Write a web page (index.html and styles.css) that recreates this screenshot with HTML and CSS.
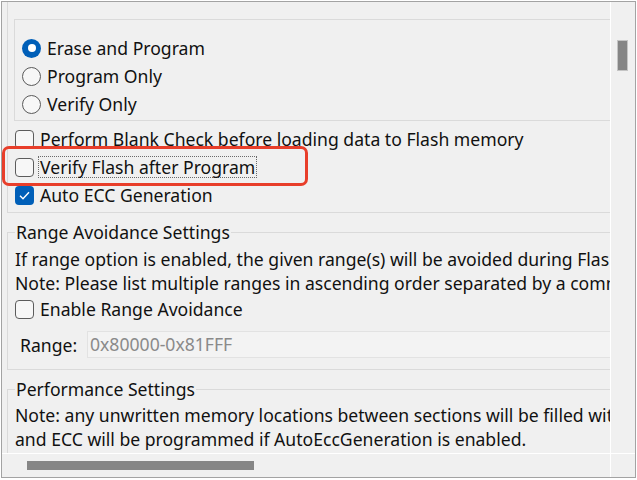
FILE: index.html
```html
<!DOCTYPE html>
<html>
<head>
<meta charset="utf-8">
<link rel="stylesheet" href="styles.css">
</head>
<body>
<div class="frame">
  <div class="viewport">
    <div class="content">
      <div class="group-outer">
        <div class="radio-box">
          <div class="row"><span class="radio on"></span><span class="lbl">Erase and Program</span></div>
          <div class="row"><span class="radio"></span><span class="lbl">Program Only</span></div>
          <div class="row"><span class="radio"></span><span class="lbl">Verify Only</span></div>
        </div>
        <div class="checks">
          <div class="row"><span class="check"></span><span class="lbl">Perform Blank Check before loading data to Flash memory</span></div>
          <div class="row"><span class="check"></span><span class="lbl focus">Verify Flash after Program</span></div>
          <div class="row"><span class="check on"><svg width="19" height="19" viewBox="0 0 19 19"><path d="M5 9.8 L8 12.8 L14 6.3" fill="none" stroke="#fff" stroke-width="1.4"/></svg></span><span class="lbl">Auto ECC Generation</span></div>
        </div>
      </div>
      <fieldset class="group range">
        <legend>Range Avoidance Settings</legend>
        <p class="line">If range option is enabled, the given range(s) will be avoided during Flash</p>
        <p class="line">Note: Please list multiple ranges in ascending order separated by a comma</p>
        <div class="row"><span class="check"></span><span class="lbl">Enable Range Avoidance</span></div>
        <div class="range-row"><span class="range-label">Range:</span><div class="input">0x80000-0x81FFF</div></div>
      </fieldset>
      <fieldset class="group perf">
        <legend>Performance Settings</legend>
        <p class="line">Note: any unwritten memory locations between sections will be filled with</p>
        <p class="line">and ECC will be programmed if AutoEccGeneration is enabled.</p>
      </fieldset>
    </div>
  </div>
  <div class="vscroll"><div class="vthumb"></div></div>
  <div class="hscroll"><div class="hthumb"></div></div>
  <div class="corner"></div>
  <div class="annot"></div>
</div>
</body>
</html>
```

FILE: styles.css
```css
html, body {
  margin: 0;
  padding: 0;
  background: #ffffff;
}
body {
  width: 637px;
  height: 480px;
  overflow: hidden;
  font-family: "Noto Sans", "Open Sans", sans-serif;
  font-size: 17.6px;
  color: #111111;
}
.frame {
  position: relative;
  margin: 1px 0 0 1px;
  width: 633px;
  height: 475px;
  border: 1px solid #a3a3a3;
  background: #f0f0f0;
  display: grid;
  grid-template-columns: 608px 25px;
  grid-template-rows: 451px 24px;
}
.viewport {
  overflow: hidden;
  background: #f0f0f0;
}
.content {
  width: 1000px;
}
.group-outer {
  margin-left: 5px;
  border: 1px solid #dadada;
  border-top: none;
  padding: 17px 0 3px 6px;
}
.radio-box {
  border: 1px solid #dadada;
  padding: 14px 0 2px 7px;
}
.row {
  display: flex;
  align-items: center;
  height: 28px;
  white-space: nowrap;
}
.radio {
  width: 19px;
  height: 19px;
  box-sizing: border-box;
  border-radius: 50%;
  border: 1px solid #5a5a5a;
  background: #f7f7f7;
  margin-right: 6px;
  flex: none;
  display: flex;
  align-items: center;
  justify-content: center;
}
.radio.on {
  border: none;
  background: #005fb8;
}
.radio.on::after {
  content: "";
  width: 8px;
  height: 8px;
  border-radius: 50%;
  background: #ffffff;
}
.checks {
  margin-top: 4px;
  padding-left: 1px;
}
.check {
  width: 19px;
  height: 19px;
  box-sizing: border-box;
  border-radius: 4px;
  border: 1px solid #5c5c5c;
  background: #f7f7f7;
  margin-right: 6px;
  flex: none;
  display: flex;
}
.check.on {
  border: none;
  background: #005fb8;
}
.focus {
  display: inline-block;
  line-height: 20px;
  border: 1px dotted #6a6a6a;
  padding: 0 1px;
  margin-left: -2px;
}
.group {
  margin: 7px 0 0 5px;
  border: 1px solid #dadada;
  padding: 3px 0 11px 7px;
  min-width: 0;
}
.group legend {
  padding: 0 1px;
  line-height: 24px;
  white-space: nowrap;
}
.line {
  margin: 0;
  line-height: 24px;
  white-space: nowrap;
}
.range-row {
  display: flex;
  align-items: center;
  margin-top: 8px;
  padding-left: 5px;
  white-space: nowrap;
}
.range-label {
  width: 67px;
  flex: none;
}
.input {
  width: 800px;
  height: 27px;
  box-sizing: border-box;
  border: 1px solid #e2e2e2;
  background: #f3f3f3;
  color: #8a8a8a;
  line-height: 25px;
  padding-left: 2px;
}
.perf {
  margin-top: 7px;
  padding: 2px 0 12px 7px;
}
.vscroll {
  border-left: 1px solid #ffffff;
  background: #f0f0f0;
  padding: 38px 0 0 6px;
}
.vthumb {
  width: 11px;
  height: 31px;
  box-sizing: border-box;
  background: #858585;
  border: 1px solid #c4c4c4;
}
.hscroll {
  border-top: 1px solid #ffffff;
  background: #f0f0f0;
  padding: 7px 0 0 25px;
}
.hthumb {
  width: 227px;
  height: 9px;
  background: #868686;
}
.corner {
  background: #f0f0f0;
  border-top: 1px solid #ffffff;
  border-left: 1px solid #ffffff;
}
.annot {
  position: absolute;
  left: 0;
  top: 144px;
  width: 300px;
  height: 34px;
  border: 3px solid #e83e2a;
  border-radius: 7px;
}
```
